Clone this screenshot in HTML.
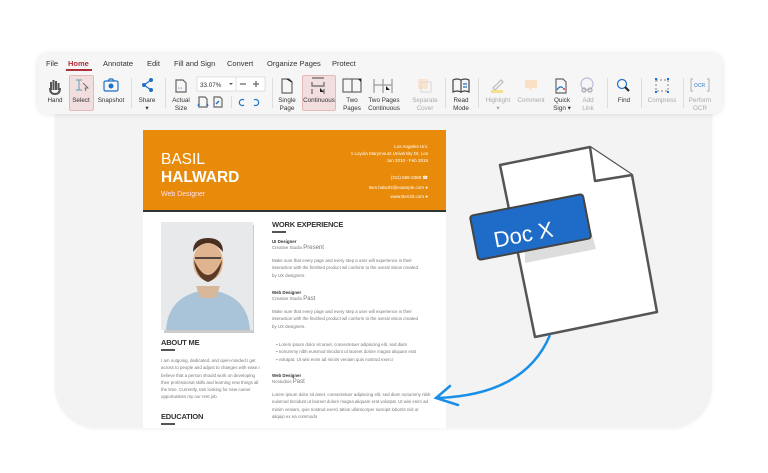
<!DOCTYPE html>
<html><head><meta charset="utf-8"><style>
*{margin:0;padding:0;box-sizing:border-box}
body{width:768px;height:473px;background:#fff;position:relative;overflow:hidden;font-family:"Liberation Sans",sans-serif}
.a{position:absolute}
.grey{left:55px;top:100px;width:657px;height:328px;background:#f3f3f3;border-radius:0 0 42px 42px;box-shadow:0 1px 3px rgba(0,0,0,.06)}
.tb{left:38px;top:54px;width:684px;height:60px;background:#f6f6f6;border-radius:10px;box-shadow:0 0 6px rgba(0,0,0,.12)}
.menu{font-size:7.5px;color:#333;top:59px}
.lbl{font-size:6.3px;color:#333;text-align:center;line-height:7.5px;width:50px;margin-left:-25px}
.dis{color:#aaa}
.sep{width:1px;height:30px;top:78px;background:#ddd}
.doc{left:143px;top:130px;width:303px;height:298px;background:#fff}
.t{font-size:4.4px;color:#777;line-height:7.3px}
.h{font-size:7.5px;color:#333;font-weight:bold;letter-spacing:-.2px}
.ul{width:14px;height:1.5px;background:#555}
</style></head><body>
<div class="a grey"></div>
<div class="a tb"></div>
<div class="a menu" style="left:46px">File</div>
<div class="a menu" style="left:68px;color:#b0303a;font-weight:bold">Home</div>
<div class="a" style="left:66px;top:69px;width:26px;height:1.5px;background:#b0303a"></div>
<div class="a menu" style="left:103px">Annotate</div>
<div class="a menu" style="left:147px">Edit</div>
<div class="a menu" style="left:174px">Fill and Sign</div>
<div class="a menu" style="left:227px">Convert</div>
<div class="a menu" style="left:267px">Organize Pages</div>
<div class="a menu" style="left:332px">Protect</div>
<div class="a" style="left:69px;top:75px;width:25px;height:36px;background:#f2dede;border:1px solid #e6b9b9;border-radius:2px"></div>
<div class="a" style="left:302px;top:75px;width:34px;height:36px;background:#f2dede;border:1px solid #e6b9b9;border-radius:2px"></div>
<svg class="a" style="left:0;top:0" width="768" height="120">
<g fill="none" stroke-width="1.2">
<path d="M51 90 v-8 M53.5 90 v-10 M56 90 v-9 M58.5 90 v-7 M50 88 q0 6 5 6 q5 0 5 -6" stroke="#555" stroke-width="2"/>
<path d="M76 80 h6 M79 80 v10 M76 90 h6" stroke="#7ab"/><path d="M83 83 l5 5 h-3 l1 3" stroke="#555" stroke-width=".8"/>
<rect x="104" y="81" width="14" height="10" rx="1.5" stroke="#1e70c8"/><circle cx="111" cy="86" r="2.5" fill="#1e70c8"/><path d="M108 81 l1.5 -2 h3 l1.5 2" stroke="#1e70c8"/>
<circle cx="151" cy="80" r="2" fill="#1e70c8"/><circle cx="144" cy="85" r="2" fill="#1e70c8"/><circle cx="151" cy="90" r="2" fill="#1e70c8"/><path d="M151 80 L144 85 L151 90" stroke="#1e70c8"/>
<path d="M176 80 h7 l3 3 v9 h-10 z" stroke="#666"/><text x="178" y="89" font-size="3" fill="#1e70c8" stroke="none">1:1</text>
<rect x="197" y="77" width="68" height="14" fill="#fff" stroke="#ccc" stroke-width=".6"/><path d="M236 77 v14" stroke="#ccc" stroke-width=".6"/>
<path d="M240 84 h6 M253 84 h6 M256 81 v6" stroke="#666"/><path d="M229 83 l2 2 l2 -2 z" fill="#555" stroke="none"/>
<path d="M199 97 h6 l2 2 v8 h-8 z M214 97 h6 l2 2 v8 h-8 z" stroke="#666"/><path d="M199 104 l-1 2 M207 104 l1 2 M216 104 l3 -3" stroke="#1e70c8" stroke-width="1.5"/>
<path d="M244 100 a3 3 0 1 0 0 5 M254 100 a3 3 0 1 1 0 5" stroke="#1e70c8"/>
<path d="M282 79 h7 l3 3 v11 h-10 z" stroke="#666"/><path d="M287 79 l5 3" stroke="#222"/>
<path d="M312 78 h12 M312 82 v4 h12 v-4 M312 89 v5 M324 89 v5" stroke="#666"/><path d="M320 88 l4 4 h-4z" fill="#222"/>
<rect x="343" y="79" width="18" height="13" stroke="#666"/><path d="M352 79 v13" stroke="#666"/><path d="M358 79 l3 3 v-3z" fill="#222"/>
<path d="M374 79 v14 M383 79 v14 M392 79 v14 M374 85 h18" stroke="#999"/><path d="M386 86 l4 4 h-4z" fill="#222"/>
<rect x="418" y="79" width="10" height="10" fill="#fbe3cc" stroke="none"/><rect x="421" y="82" width="10" height="10" stroke="#ddd"/>
<path d="M453 80 q4 -2 8 0 v12 q-4 -2 -8 0 z M461 80 q4 -2 8 0 v12 q-4 -2 -8 0 z" stroke="#444"/><path d="M463 84 h4 M463 87 h4" stroke="#1e70c8"/>
<path d="M493 88 l8 -8 l2 2 l-8 8 z" stroke="#bbb"/><rect x="491" y="90" width="12" height="3" fill="#f7e08c" stroke="none"/>
<path d="M525 80 h12 v8 h-5 l-2 3 l-1 -3 h-4 z" fill="#fbe0c8" stroke="none"/>
<path d="M556 79 h7 l3 3 v11 h-10 z" stroke="#666"/><path d="M557 90 q3 -5 6 -2" stroke="#1e70c8"/><circle cx="564" cy="89" r="1" fill="#d33"/>
<circle cx="587" cy="84" r="6" stroke="#bbd"/><circle cx="584" cy="90" r="2" stroke="#aaa"/><circle cx="590" cy="90" r="2" stroke="#aaa"/>
<circle cx="622" cy="84" r="4.5" stroke="#1e70c8"/><path d="M625 87 l4 4" stroke="#222" stroke-width="2"/>
<rect x="656" y="80" width="12" height="11" stroke="#999" stroke-dasharray="2 2"/><path d="M655 79 h2 M667 79 h2 M655 92 h2 M667 92 h2" stroke="#1e70c8" stroke-width="2"/>
<path d="M693 79 h-2 v12 h2 M707 79 h2 v12 h-2" stroke="#bbb"/><text x="694" y="87" font-size="5" fill="#6aa0d8" stroke="none" font-weight="bold">OCR</text>
</g>
<text x="200" y="87" font-size="6.3" fill="#333">33.07%</text>
</svg>
<div class="a sep" style="left:131px"></div><div class="a sep" style="left:165px"></div><div class="a sep" style="left:231px;top:96px;height:12px"></div><div class="a sep" style="left:272px"></div><div class="a sep" style="left:445px"></div><div class="a sep" style="left:478px"></div><div class="a sep" style="left:607px"></div><div class="a sep" style="left:641px"></div><div class="a sep" style="left:683px"></div>
<div class="a lbl" style="left:55px;top:97px">Hand</div>
<div class="a lbl" style="left:81px;top:97px">Select</div>
<div class="a lbl" style="left:111px;top:97px">Snapshot</div>
<div class="a lbl" style="left:147px;top:97px">Share<br>▾</div>
<div class="a lbl" style="left:181px;top:97px">Actual<br>Size</div>
<div class="a lbl" style="left:287px;top:97px">Single<br>Page</div>
<div class="a lbl" style="left:319px;top:97px">Continuous</div>
<div class="a lbl" style="left:352px;top:97px">Two<br>Pages</div>
<div class="a lbl" style="left:384px;top:97px">Two Pages<br>Continuous</div>
<div class="a lbl dis" style="left:425px;top:97px">Separate<br>Cover</div>
<div class="a lbl" style="left:461px;top:97px">Read<br>Mode</div>
<div class="a lbl dis" style="left:498px;top:97px">Highlight<br>▾</div>
<div class="a lbl dis" style="left:531px;top:97px">Comment</div>
<div class="a lbl" style="left:562px;top:97px">Quick<br>Sign ▾</div>
<div class="a lbl dis" style="left:588px;top:97px">Add<br>Link</div>
<div class="a lbl" style="left:624px;top:97px">Find</div>
<div class="a lbl dis" style="left:662px;top:97px">Compress</div>
<div class="a lbl dis" style="left:700px;top:97px">Perform<br>OCR</div>

<div class="a doc">
 <div class="a" style="left:0;top:0;width:303px;height:80px;background:#e88b0a"></div>
 <div class="a" style="left:0;top:80px;width:303px;height:2px;background:#333"></div>
 <div class="a" style="left:18px;top:21px;color:#fff;font-size:15.5px;line-height:17.5px">BASIL<br><b>HALWARD</b></div>
 <div class="a" style="left:18px;top:61px;color:#fde;font-size:7px">Web Designer</div>
 <div class="a" style="right:18px;top:13px;color:#fff;font-size:4.5px;line-height:7px;text-align:right">Los Angeles Uni.<br>1 Loyola Marymount University Dr, Los<br>Jun 2010 - Feb 2015</div>
 <div class="a" style="right:18px;top:43px;color:#fff;font-size:4.5px;line-height:9.5px;text-align:right">(311) 555-2368 ☎<br>Ben.halw33@example.com ●<br>www.Ben33.com ●</div>
 <div class="a" style="left:21px;top:95px;width:90px;height:108px;background:#ccc"></div>
 <svg class="a" style="left:18px;top:92px" width="92" height="108"><rect width="92" height="108" fill="#e8e9ea"/><path d="M5 108 q2 -30 30 -38 l12 -4 l12 4 q28 8 30 38 z" fill="#a9c3d8"/><path d="M35 64 h24 l-4 12 h-16z" fill="#d8b89a"/><ellipse cx="47" cy="40" rx="15" ry="19" fill="#e0b48f"/><path d="M33 38 q14 30 28 0 q-2 18 -14 22 q-12 -4 -14 -22z" fill="#5a3a28"/><path d="M32 30 q15 -18 30 0 q0 -14 -15 -14 q-15 0 -15 14z" fill="#4a2e20"/><path d="M34 36 h26" stroke="#222" stroke-width="1.5"/></svg>
 <div class="a h" style="left:18px;top:208px">ABOUT ME</div><div class="a ul" style="left:18px;top:219px"></div>
 <div class="a t" style="left:18px;top:227px;width:102px">I am outgoing, dedicated, and open-minded.I get across to people and adjust to changes with ease.I believe that a person should work on developing their professional skills and learning new things all the time. Currently, Iam looking for new career opportunities my our rent job</div>
 <div class="a h" style="left:18px;top:282px">EDUCATION</div><div class="a ul" style="left:18px;top:293px"></div>
 <div class="a h" style="left:129px;top:90px">WORK EXPERIENCE</div><div class="a ul" style="left:129px;top:101px"></div>
 <div class="a" style="left:129px;top:109px;font-size:4.4px;color:#333;font-weight:bold">UI Designer</div>
 <div class="a t" style="left:129px;top:114px">Creative Studio <span style="font-size:6px">Present</span></div>
 <div class="a t" style="left:129px;top:127px;width:150px">Make sure that every page and every step a user will experience in their interaction with the finished product wil conform to the overal vision created by UX designers.</div>
 <div class="a" style="left:129px;top:160px;font-size:4.4px;color:#333;font-weight:bold">Web Designer</div>
 <div class="a t" style="left:129px;top:165px">Creative Studio <span style="font-size:6px">Past</span></div>
 <div class="a t" style="left:129px;top:178px;width:150px">Make sure that every page and every step a user will experience in their interaction with the finished product wil conform to the overal vision created by UX designers.</div>
 <div class="a t" style="left:133px;top:211px;width:165px">▪ Lorem ipsum dolor sit amet, consectetuer adipiscing elit, sed diam<br>▪ nonummy nibh euismod tincidunt ut laoreet dolore magna aliquam erat<br>▪ volutpat. Ut wisi enim ad minim veniam quis nostrud exerci</div>
 <div class="a" style="left:129px;top:243px;font-size:4.4px;color:#333;font-weight:bold">Web Designer</div>
 <div class="a t" style="left:129px;top:248px">Nostudios <span style="font-size:6px">Past</span></div>
 <div class="a t" style="left:129px;top:261px;width:160px">Lorem ipsum dolor sit amet, consectetuer adipiscing elit, sed diam nonummy nibh euismod tincidunt ut laoreet dolore magna aliquam erat volutpat. Ut wisi enim ad minim veniam, quis nostrud exerci tation ullamcorper suscipit lobortis nisl ut aliquip ex ea commodo</div>
</div>
<svg class="a" style="left:0;top:0" width="768" height="473">
<path d="M500 165 L590 147 L632 175 L657 312 L535 337 Z" fill="#fff" stroke="#555" stroke-width="2.5" stroke-linejoin="round"/>
<path d="M590 147 L595 181 L632 175" fill="#fff" stroke="#555" stroke-width="2.5" stroke-linejoin="round"/>
<path d="M524 209 L583 203 L596 249 L525 263 Z" fill="#ddd"/>
<g transform="rotate(-11 528 227)"><rect x="473" y="205" width="115" height="45" rx="3" fill="#1e6bc8" stroke="#444" stroke-width="2"/>
<text x="492" y="241" font-size="22" fill="#fff" font-family="Liberation Sans,sans-serif">Doc X</text></g>
<path d="M550 335 Q525 395 437 398" fill="none" stroke="#1a8fe8" stroke-width="2.5"/>
<path d="M450 386 L436 398 L458 405" fill="none" stroke="#1a8fe8" stroke-width="2.5" stroke-linecap="round"/>
</svg>
</body></html>
